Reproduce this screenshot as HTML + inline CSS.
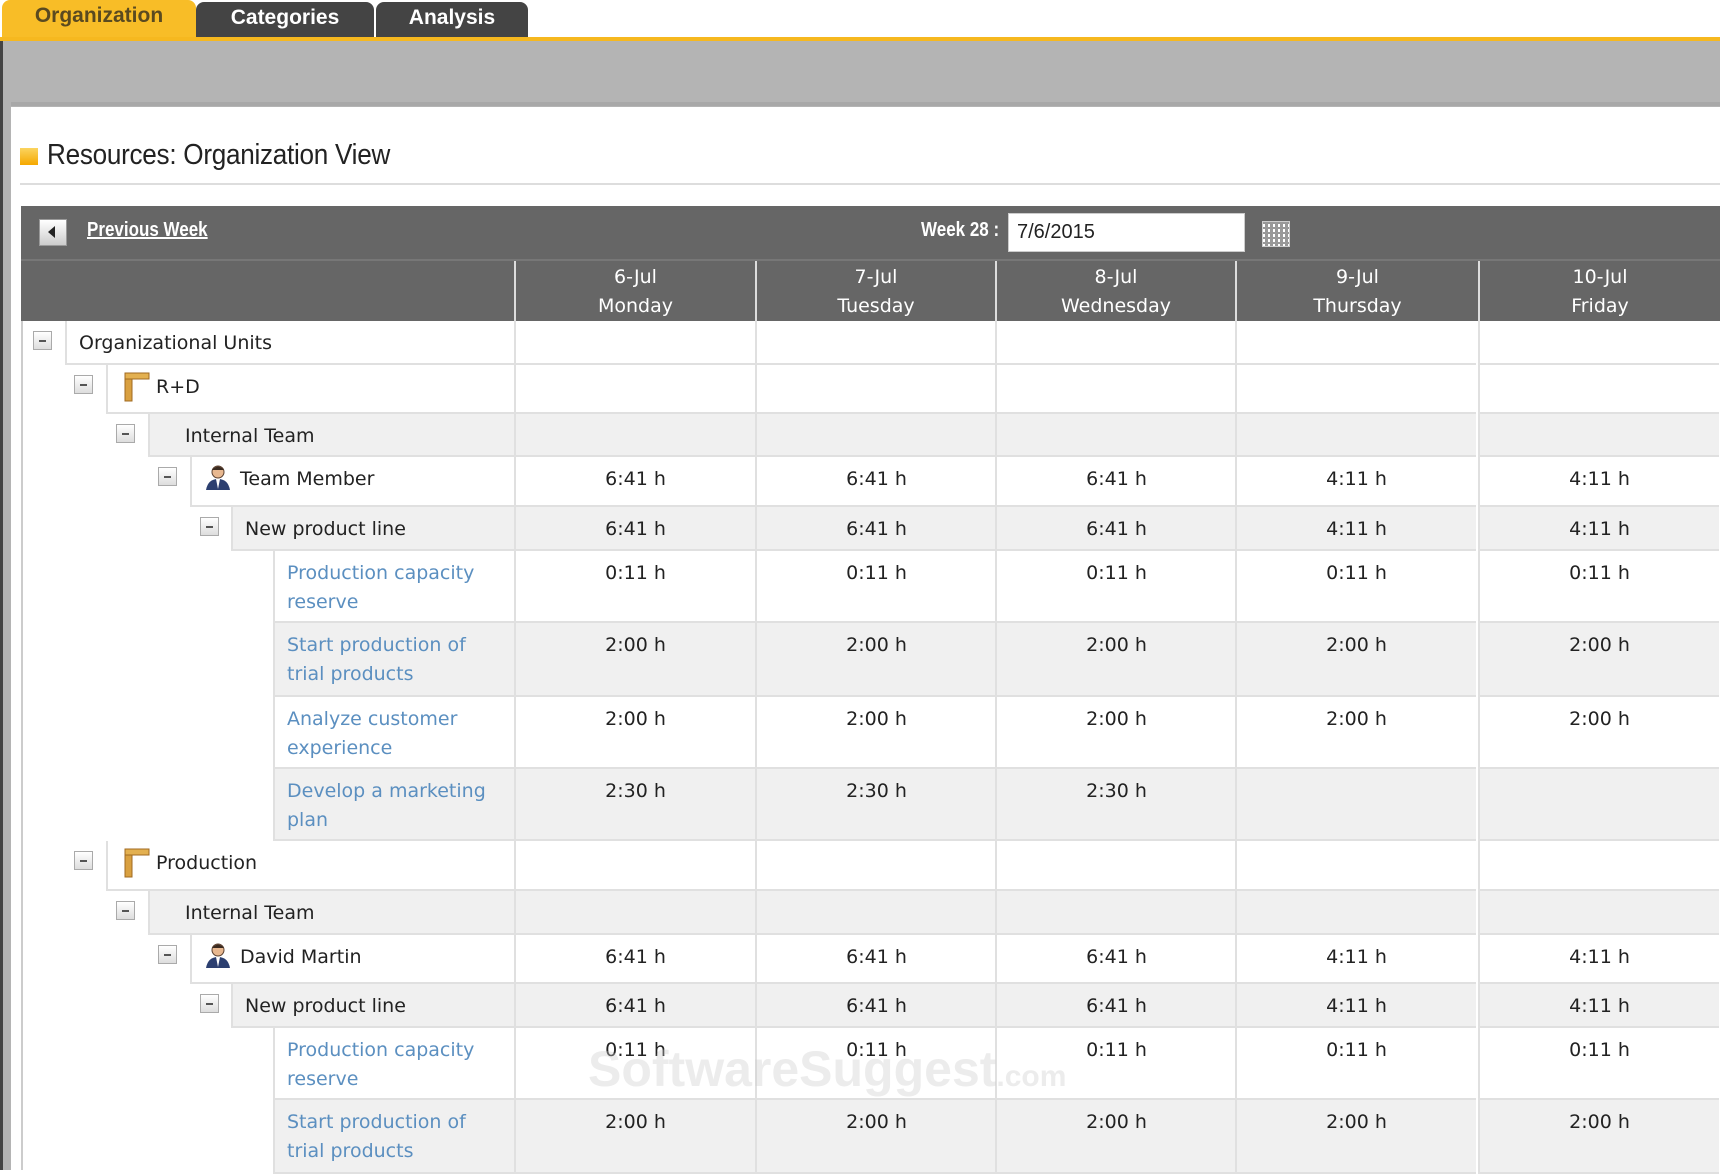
<!DOCTYPE html>
<html><head><meta charset="utf-8"><style>
*{margin:0;padding:0;box-sizing:border-box}
body{width:1720px;height:1170px;overflow:hidden;background:#fff;position:relative;font-family:"DejaVu Sans","Liberation Sans",sans-serif}
.a{position:absolute}
.tab{position:absolute;top:0;height:37px;font:bold 21px "Liberation Sans",sans-serif;text-align:center;line-height:32px;border-radius:8px 8px 0 0}
.row{position:absolute;left:21px;width:1699px}
.tc{position:absolute;top:0;bottom:0;left:0;border-left:2px solid #e0e0e0;border-bottom:2px solid #e0e0e0;font-size:19px;color:#222;padding:8px 0 0 12px;line-height:29px}
.v{position:absolute;top:0;bottom:0;width:241px;text-align:center;font-size:19px;color:#222;padding-top:8px;border-left:2px solid #e0e0e0;border-bottom:2px solid #e0e0e0;line-height:29px}
.tg{position:absolute;width:19px;height:19px;border:1px solid #aaa;background:linear-gradient(#fff,#ddd)}
.tg:after{content:"";position:absolute;left:5px;top:8px;width:7px;height:2px;background:#555}
.lk{color:#5b8fc0}
.g{background:#f0f0f0}
</style></head><body>
<div class="a" style="left:0;top:37px;width:1720px;height:4px;background:#f6b81f"></div>
<div class="tab" style="left:2px;width:194px;background:#f8bd27;color:#5a4a20">Organization</div>
<div class="tab" style="left:196px;width:178px;background:#444;color:#fff;top:2px;height:35px">Categories</div>
<div class="tab" style="left:376px;width:152px;background:#444;color:#fff;top:2px;height:35px">Analysis</div>
<div class="a" style="left:0;top:41px;width:1720px;height:66px;background:#b4b4b4"></div>
<div class="a" style="left:0;top:41px;width:11px;height:1129px;background:#b4b4b4"></div>
<div class="a" style="left:0;top:41px;width:3px;height:1129px;background:#444"></div>
<div class="a" style="left:11px;top:102px;width:1709px;height:4px;background:#a8a8a8"></div>
<div class="a" style="left:20px;top:148px;width:18px;height:17px;background:linear-gradient(#fbd460,#f5a800)"></div>
<div class="a" style="left:47px;top:139px;font:29px 'Liberation Sans',sans-serif;color:#222;transform:scaleX(.9);transform-origin:left;letter-spacing:-.3px">Resources: Organization View</div>
<div class="a" style="left:20px;top:183px;width:1700px;height:2px;background:#ddd"></div>
<div class="a" style="left:21px;top:206px;width:1699px;height:115px;background:#666"></div>
<div class="a" style="left:21px;top:259px;width:1699px;height:2px;background:#777"></div>
<div class="a" style="left:39px;top:219px;width:28px;height:27px;background:linear-gradient(#fff,#ccc);border:1px solid #999"></div>
<div class="a" style="left:48px;top:226px;width:0;height:0;border-top:6px solid transparent;border-bottom:6px solid transparent;border-right:7px solid #222"></div>
<div class="a" style="left:87px;top:219px;font:bold 20px 'Liberation Sans',sans-serif;color:#fff;text-decoration:underline;transform:scaleX(.85);transform-origin:left">Previous Week</div>
<div class="a" style="left:921px;top:219px;font:bold 20px 'Liberation Sans',sans-serif;color:#fff;transform:scaleX(.85);transform-origin:left">Week 28 :</div>
<div class="a" style="left:1008px;top:213px;width:237px;height:39px;background:#fff;border:1px solid #ccc;font:20px 'Liberation Sans',sans-serif;color:#222;padding:7px 8px">7/6/2015</div>
<div class="a" style="left:1262px;top:221px;width:28px;height:26px;border:1px solid #ccc;background:repeating-linear-gradient(90deg,#fff 0 2px,#999 2px 5px),#fff"><div style="position:absolute;inset:0;background:repeating-linear-gradient(#999 0 2px,transparent 2px 5px)"></div></div>
<div class="a" style="left:514px;top:261px;width:2px;height:60px;background:#ddd"></div>
<div class="a" style="left:755px;top:261px;width:2px;height:60px;background:#ddd"></div>
<div class="a" style="left:995px;top:261px;width:2px;height:60px;background:#ddd"></div>
<div class="a" style="left:1235px;top:261px;width:2px;height:60px;background:#ddd"></div>
<div class="a" style="left:1478px;top:261px;width:2px;height:60px;background:#ddd"></div>
<div class="a" style="left:516px;top:263px;width:239px;text-align:center;color:#fff;font-size:19px;line-height:29px">6-Jul<br>Monday</div>
<div class="a" style="left:757px;top:263px;width:238px;text-align:center;color:#fff;font-size:19px;line-height:29px">7-Jul<br>Tuesday</div>
<div class="a" style="left:997px;top:263px;width:238px;text-align:center;color:#fff;font-size:19px;line-height:29px">8-Jul<br>Wednesday</div>
<div class="a" style="left:1237px;top:263px;width:241px;text-align:center;color:#fff;font-size:19px;line-height:29px">9-Jul<br>Thursday</div>
<div class="a" style="left:1480px;top:263px;width:240px;text-align:center;color:#fff;font-size:19px;line-height:29px">10-Jul<br>Friday</div>
<div class="a" style="left:21px;top:321px;width:2px;height:849px;background:#ccc"></div>

<div class="row" style="top:321px;height:44px"><div class="tg" style="left:12px;top:10px"></div><div class="tc" style="left:44px;right:1206px">Organizational Units</div><div class="v" style="left:493px"></div><div class="v" style="left:734px"></div><div class="v" style="left:974px"></div><div class="v" style="left:1214px"></div><div class="v" style="left:1457px"></div></div>

<div class="row" style="top:365px;height:49px"><div class="tg" style="left:53px;top:10px"></div><div class="tc" style="left:85px;right:1206px;padding-left:48px"><svg class="a" style="left:12px;top:6px" width="30" height="32"><rect x="5" y="2" width="7" height="28" fill="#d9a040" stroke="#a06a20"/><rect x="5" y="2" width="24" height="6" fill="#e3b050" stroke="#a06a20"/></svg>R+D</div><div class="v" style="left:493px"></div><div class="v" style="left:734px"></div><div class="v" style="left:974px"></div><div class="v" style="left:1214px"></div><div class="v" style="left:1457px"></div></div>

<div class="row" style="top:414px;height:43px"><div class="tg" style="left:95px;top:10px"></div><div class="tc g" style="left:127px;right:1206px;padding-left:35px">Internal Team</div><div class="v g" style="left:493px"></div><div class="v g" style="left:734px"></div><div class="v g" style="left:974px"></div><div class="v g" style="left:1214px"></div><div class="v g" style="left:1457px"></div></div>

<div class="row" style="top:457px;height:50px"><div class="tg" style="left:137px;top:10px"></div><div class="tc" style="left:169px;right:1206px;padding-left:48px"><svg class="a" style="left:12px;top:6px" width="28" height="28"><circle cx="14" cy="9" r="6" fill="#e8b890" stroke="#5a4030"/><path d="M8 7 Q14 0 20 7" fill="#3a2a20"/><path d="M2 27 Q4 16 14 16 Q24 16 26 27Z" fill="#2c3f70"/><path d="M12 16 L14 26 L16 16Z" fill="#fff"/></svg>Team Member</div><div class="v" style="left:493px">6:41 h</div><div class="v" style="left:734px">6:41 h</div><div class="v" style="left:974px">6:41 h</div><div class="v" style="left:1214px">4:11 h</div><div class="v" style="left:1457px">4:11 h</div></div>

<div class="row" style="top:507px;height:44px"><div class="tg" style="left:179px;top:10px"></div><div class="tc g" style="left:210px;right:1206px">New product line</div><div class="v g" style="left:493px">6:41 h</div><div class="v g" style="left:734px">6:41 h</div><div class="v g" style="left:974px">6:41 h</div><div class="v g" style="left:1214px">4:11 h</div><div class="v g" style="left:1457px">4:11 h</div></div>

<div class="row" style="top:551px;height:72px"><div class="tc lk" style="left:252px;right:1206px">Production capacity<br>reserve</div><div class="v" style="left:493px">0:11 h</div><div class="v" style="left:734px">0:11 h</div><div class="v" style="left:974px">0:11 h</div><div class="v" style="left:1214px">0:11 h</div><div class="v" style="left:1457px">0:11 h</div></div>

<div class="row" style="top:623px;height:74px"><div class="tc lk g" style="left:252px;right:1206px">Start production of<br>trial products</div><div class="v g" style="left:493px">2:00 h</div><div class="v g" style="left:734px">2:00 h</div><div class="v g" style="left:974px">2:00 h</div><div class="v g" style="left:1214px">2:00 h</div><div class="v g" style="left:1457px">2:00 h</div></div>

<div class="row" style="top:697px;height:72px"><div class="tc lk" style="left:252px;right:1206px">Analyze customer<br>experience</div><div class="v" style="left:493px">2:00 h</div><div class="v" style="left:734px">2:00 h</div><div class="v" style="left:974px">2:00 h</div><div class="v" style="left:1214px">2:00 h</div><div class="v" style="left:1457px">2:00 h</div></div>

<div class="row" style="top:769px;height:72px"><div class="tc lk g" style="left:252px;right:1206px">Develop a marketing<br>plan</div><div class="v g" style="left:493px">2:30 h</div><div class="v g" style="left:734px">2:30 h</div><div class="v g" style="left:974px">2:30 h</div><div class="v g" style="left:1214px"></div><div class="v g" style="left:1457px"></div></div>

<div class="row" style="top:841px;height:50px"><div class="tg" style="left:53px;top:10px"></div><div class="tc" style="left:85px;right:1206px;padding-left:48px"><svg class="a" style="left:12px;top:6px" width="30" height="32"><rect x="5" y="2" width="7" height="28" fill="#d9a040" stroke="#a06a20"/><rect x="5" y="2" width="24" height="6" fill="#e3b050" stroke="#a06a20"/></svg>Production</div><div class="v" style="left:493px"></div><div class="v" style="left:734px"></div><div class="v" style="left:974px"></div><div class="v" style="left:1214px"></div><div class="v" style="left:1457px"></div></div>

<div class="row" style="top:891px;height:44px"><div class="tg" style="left:95px;top:10px"></div><div class="tc g" style="left:127px;right:1206px;padding-left:35px">Internal Team</div><div class="v g" style="left:493px"></div><div class="v g" style="left:734px"></div><div class="v g" style="left:974px"></div><div class="v g" style="left:1214px"></div><div class="v g" style="left:1457px"></div></div>

<div class="row" style="top:935px;height:49px"><div class="tg" style="left:137px;top:10px"></div><div class="tc" style="left:169px;right:1206px;padding-left:48px"><svg class="a" style="left:12px;top:6px" width="28" height="28"><circle cx="14" cy="9" r="6" fill="#e8b890" stroke="#5a4030"/><path d="M8 7 Q14 0 20 7" fill="#3a2a20"/><path d="M2 27 Q4 16 14 16 Q24 16 26 27Z" fill="#2c3f70"/><path d="M12 16 L14 26 L16 16Z" fill="#fff"/></svg>David Martin</div><div class="v" style="left:493px">6:41 h</div><div class="v" style="left:734px">6:41 h</div><div class="v" style="left:974px">6:41 h</div><div class="v" style="left:1214px">4:11 h</div><div class="v" style="left:1457px">4:11 h</div></div>

<div class="row" style="top:984px;height:44px"><div class="tg" style="left:179px;top:10px"></div><div class="tc g" style="left:210px;right:1206px">New product line</div><div class="v g" style="left:493px">6:41 h</div><div class="v g" style="left:734px">6:41 h</div><div class="v g" style="left:974px">6:41 h</div><div class="v g" style="left:1214px">4:11 h</div><div class="v g" style="left:1457px">4:11 h</div></div>

<div class="row" style="top:1028px;height:72px"><div class="tc lk" style="left:252px;right:1206px">Production capacity<br>reserve</div><div class="v" style="left:493px">0:11 h</div><div class="v" style="left:734px">0:11 h</div><div class="v" style="left:974px">0:11 h</div><div class="v" style="left:1214px">0:11 h</div><div class="v" style="left:1457px">0:11 h</div></div>

<div class="row" style="top:1100px;height:74px"><div class="tc lk g" style="left:252px;right:1206px">Start production of<br>trial products</div><div class="v g" style="left:493px">2:00 h</div><div class="v g" style="left:734px">2:00 h</div><div class="v g" style="left:974px">2:00 h</div><div class="v g" style="left:1214px">2:00 h</div><div class="v g" style="left:1457px">2:00 h</div></div>

<div class="a" style="left:588px;top:1040px;font:bold 50px 'Liberation Sans',sans-serif;color:rgba(200,200,200,.35)">SoftwareSuggest<span style="font-size:30px">.com</span></div>
</body></html>
